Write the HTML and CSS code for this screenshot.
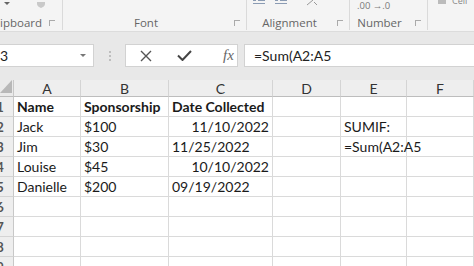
FILE: index.html
```html
<!DOCTYPE html>
<html>
<head>
<meta charset="utf-8">
<link rel="stylesheet" href="styles.css">
</head>
<body>
<div class="app">
  <div class="ribbon">
    <div class="group g-clip">
      <div class="tools">
        <svg class="ico-drop" width="6" height="4" viewBox="0 0 6 4"><path d="M0 0h6L3 3z" fill="#666"/></svg>
        <svg class="ico-brush" width="10" height="6" viewBox="0 0 10 6"><path d="M1 0h8v2c0 2-2 3-4 4C3 5 1 4 1 2z" fill="#c9c9c9"/></svg>
      </div>
      <div class="label"><span class="name">ipboard</span><span class="launch"></span></div>
    </div>
    <div class="group g-font">
      <div class="tools"></div>
      <div class="label"><span class="name">Font</span><span class="launch"></span></div>
    </div>
    <div class="group g-align">
      <div class="tools">
        <svg width="40" height="6" viewBox="0 0 40 6"><g fill="#8a9bb3"><rect x="0" y="0" width="3" height="1"/><rect x="5" y="0" width="7" height="1"/><rect x="0" y="3" width="12" height="1"/><rect x="22" y="0" width="3" height="1"/><rect x="27" y="0" width="7" height="1"/><rect x="22" y="3" width="12" height="1"/></g></svg>
        <svg width="14" height="6" viewBox="0 0 14 6"><path d="M2 5L8 0M9 2l3 3" stroke="#999" fill="none"/></svg>
      </div>
      <div class="label"><span class="name">Alignment</span><span class="launch"></span></div>
    </div>
    <div class="group g-num">
      <div class="tools"><span class="dec">.00 &#8594;.0</span></div>
      <div class="label"><span class="name">Number</span><span class="launch"></span></div>
    </div>
    <div class="group g-more">
      <div class="tools"><svg width="10" height="6" viewBox="0 0 10 6"><rect x="1" y="0" width="8" height="4" fill="#bbb"/></svg><span class="cut">Cell</span></div>
    </div>
  </div>

  <div class="fbar">
    <div class="namebox"><span class="ref">3</span><svg width="6" height="4" viewBox="0 0 6 4"><path d="M0 0h6L3 3z" fill="#777"/></svg></div>
    <div class="grip"><i></i><i></i><i></i></div>
    <div class="fbtns">
      <svg width="12" height="12" viewBox="0 0 12 12"><path d="M1 1l10 10M11 1L1 11" stroke="#555" stroke-width="1.4"/></svg>
      <svg width="15" height="11" viewBox="0 0 15 11"><path d="M1 5.5l4.5 4.5L14 1" stroke="#444" stroke-width="2" fill="none"/></svg>
      <span class="fx">fx</span>
    </div>
    <div class="finput">=Sum(A2:A5</div>
  </div>

  <div class="sheet">
    <div class="corner"><svg width="14" height="17" viewBox="0 0 14 17"><path d="M0 13L12 0V13z" fill="#b8b8b8"/></svg></div>
    <div class="ch">A</div><div class="ch">B</div><div class="ch">C</div><div class="ch">D</div><div class="ch">E</div><div class="ch">F</div>

    <div class="rh"><span>1</span></div>
    <div class="c b">Name</div><div class="c b">Sponsorship</div><div class="c b">Date Collected</div><div class="c"></div><div class="c"></div><div class="c"></div>

    <div class="rh"><span>2</span></div>
    <div class="c">Jack</div><div class="c">$100</div><div class="c r">11/10/2022</div><div class="c"></div><div class="c">SUMIF:</div><div class="c"></div>

    <div class="rh"><span>3</span></div>
    <div class="c">Jim</div><div class="c">$30</div><div class="c">11/25/2022</div><div class="c"></div><div class="c over">=Sum(A2:A5</div><div class="c"></div>

    <div class="rh"><span>4</span></div>
    <div class="c">Louise</div><div class="c">$45</div><div class="c r">10/10/2022</div><div class="c"></div><div class="c"></div><div class="c"></div>

    <div class="rh"><span>5</span></div>
    <div class="c">Danielle</div><div class="c">$200</div><div class="c">09/19/2022</div><div class="c"></div><div class="c"></div><div class="c"></div>

    <div class="rh"><span>6</span></div>
    <div class="c"></div><div class="c"></div><div class="c"></div><div class="c"></div><div class="c"></div><div class="c"></div>

    <div class="rh"><span>7</span></div>
    <div class="c"></div><div class="c"></div><div class="c"></div><div class="c"></div><div class="c"></div><div class="c"></div>

    <div class="rh"><span>8</span></div>
    <div class="c"></div><div class="c"></div><div class="c"></div><div class="c"></div><div class="c"></div><div class="c"></div>

    <div class="rh"><span>9</span></div>
    <div class="c"></div><div class="c"></div><div class="c"></div><div class="c"></div><div class="c"></div><div class="c"></div>
  </div>
</div>
</body>
</html>
```

FILE: styles.css
```css
html, body {
  margin: 0;
  padding: 0;
  width: 474px;
  height: 266px;
  overflow: hidden;
  background: #ffffff;
}
.app {
  width: 474px;
  height: 266px;
  overflow: hidden;
  font-family: Lato, "Open Sans", sans-serif;
}

/* Ribbon */
.ribbon {
  height: 31px;
  background: #f4f4f4;
  border-bottom: 1px solid #dcdcdc;
  display: flex;
}
.group {
  box-sizing: border-box;
  border-right: 1px solid #dadada;
  height: 30px;
  display: flex;
  flex-direction: column;
}
.g-clip { width: 63px; }
.g-font { width: 184px; }
.g-align { width: 103px; }
.g-num { width: 78px; }
.g-more { flex: 1; border-right: none; }
.tools {
  height: 16px;
  display: flex;
  align-items: flex-start;
  gap: 6px;
}
.g-clip .tools { padding-left: 4px; gap: 26px; padding-top: 2px; }
.g-align .tools { padding-left: 6px; gap: 12px; }
.g-num .tools { padding-left: 7px; }
.g-more .tools { padding-left: 9px; gap: 5px; }
.dec {
  font-family: "Open Sans", sans-serif;
  font-size: 9.5px;
  color: #7a7a7a;
  line-height: 12px;
  margin-top: 0;
}
.cut {
  font-family: "Open Sans", sans-serif;
  font-size: 9px;
  color: #888;
  line-height: 6px;
  margin-top: -2px;
}
.label {
  height: 15px;
  display: flex;
  align-items: center;
  font-family: "Open Sans", sans-serif;
  font-size: 11.5px;
  color: #666;
}
.label .name { flex: 1; text-align: center; }
.g-clip .label .name { text-align: left; flex: none; width: 49px; margin-left: 0; }
.g-font .label .name { padding-right: 5px; }
.g-align .label .name { padding-right: 5px; }
.g-num .label .name { padding-right: 6px; }
.launch {
  width: 5px;
  height: 5px;
  border-left: 1px solid #aaa;
  border-top: 1px solid #aaa;
  margin-right: 6px;
  margin-top: 1px;
}

/* Formula bar */
.fbar {
  height: 48px;
  background: #e8e8e8;
  box-sizing: border-box;
  padding-top: 12px;
  display: flex;
  align-items: flex-start;
}
.namebox {
  width: 94px;
  height: 23px;
  background: #fff;
  border: 1px solid #d2d2d2;
  border-left: none;
  box-sizing: border-box;
  display: flex;
  align-items: center;
  justify-content: space-between;
  padding: 0 7px 0 0;
  font-size: 14px;
  color: #222;
}
.grip {
  width: 31px;
  height: 23px;
  display: flex;
  flex-direction: column;
  align-items: center;
  justify-content: center;
  gap: 2px;
}
.grip i {
  width: 2px;
  height: 2px;
  background: #b0b0b0;
  border-radius: 1px;
}
.fbtns {
  width: 113px;
  height: 23px;
  background: #fff;
  border: 1px solid #d2d2d2;
  box-sizing: border-box;
  display: flex;
  align-items: center;
  padding-left: 14px;
  gap: 25px;
}
.fx {
  font-family: "Liberation Serif", serif;
  font-style: italic;
  font-size: 15px;
  color: #666;
  margin-left: 6px;
}
.finput {
  flex: 1;
  margin-left: 6px;
  height: 23px;
  background: #fff;
  border: 1px solid #d2d2d2;
  border-right: none;
  box-sizing: border-box;
  font-size: 14px;
  color: #222;
  padding-left: 9px;
  line-height: 21px;
}

/* Sheet */
.sheet {
  display: grid;
  grid-template-columns: 14px 67px 88px 104px 68px 66px 67px;
  grid-template-rows: 17px repeat(9, 20px);
  background: #fff;
}
.corner {
  background: #eaeaea;
  border-right: 1px solid #c8c8c8;
  border-bottom: 1px solid #bdbdbd;
  box-sizing: border-box;
  overflow: hidden;
}
.corner svg { display: block; }
.ch {
  background: #eeeeee;
  border-right: 1px solid #d4d4d4;
  border-bottom: 1px solid #bdbdbd;
  box-sizing: border-box;
  display: flex;
  align-items: center;
  justify-content: center;
  font-size: 14px;
  color: #333;
  padding-top: 1px;
}
.rh {
  background: #eeeeee;
  border-right: 1px solid #c8c8c8;
  border-bottom: 1px solid #d4d4d4;
  box-sizing: border-box;
  overflow: hidden;
  display: flex;
  justify-content: flex-end;
  align-items: center;
  padding-right: 8px;
  font-size: 13px;
  color: #555;
  font-weight: bold;
}
.rh span { width: 10px; text-align: center; flex: none; }
.c {
  border-right: 1px solid #dadada;
  border-bottom: 1px solid #dadada;
  box-sizing: border-box;
  font-size: 14px;
  color: #1a1a1a;
  padding: 0 3px;
  display: flex;
  align-items: flex-end;
  padding-bottom: 1px;
  white-space: nowrap;
  line-height: 17px;
}
.c.b { font-weight: bold; }
.c.r { justify-content: flex-end; }
.c.over { overflow: visible; position: relative; z-index: 1; }
```
